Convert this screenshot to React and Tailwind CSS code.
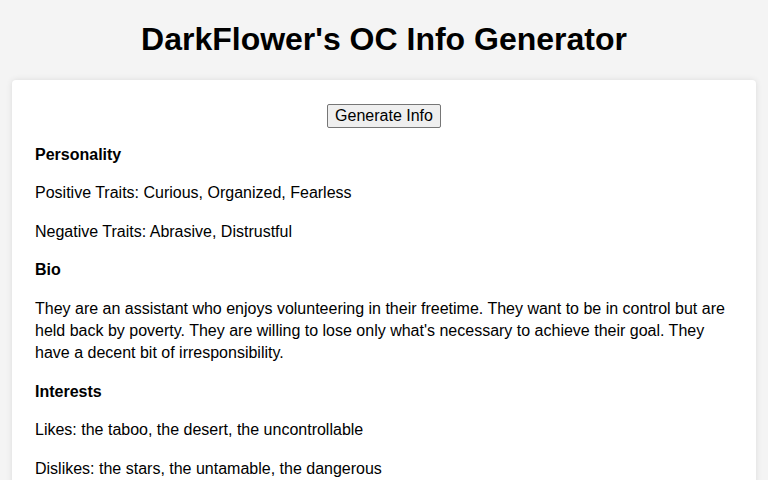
const traits = {
  positive: ["Curious", "Organized", "Fearless"],
  negative: ["Abrasive", "Distrustful"],
};

const bio =
  "They are an assistant who enjoys volunteering in their freetime. They want to be in control but are held back by poverty. They are willing to lose only what's necessary to achieve their goal. They have a decent bit of irresponsibility.";

const interests = {
  likes: ["the taboo", "the desert", "the uncontrollable"],
  dislikes: ["the stars", "the untamable", "the dangerous"],
};

function Section({ title, children }) {
  return (
    <>
      <p className="font-bold mb-4">{title}</p>
      {children}
    </>
  );
}

export default function App() {
  return (
    <div className="min-h-screen bg-[#f4f4f4] text-black font-['Liberation_Sans',Arial,sans-serif] leading-[1.4]">
      <h1 className="text-center text-[32px] font-bold leading-[37px] pt-[21px] pb-[22px]">
        DarkFlower's OC Info Generator
      </h1>
      <div className="mx-3 bg-white rounded shadow-[0_0_6px_rgba(0,0,0,0.1)] px-[23px] pt-6 pb-6">
        <div className="flex justify-center mb-4">
          <button
            type="button"
            className="bg-[#efefef] border border-[#767676] rounded-[2px] px-[7px] py-0 text-base leading-[22px] hover:bg-[#e5e5e5]"
          >
            Generate Info
          </button>
        </div>

        <Section title="Personality">
          <p className="mb-4">Positive Traits: {traits.positive.join(", ")}</p>
          <p className="mb-4">Negative Traits: {traits.negative.join(", ")}</p>
        </Section>

        <Section title="Bio">
          <p className="mb-4">{bio}</p>
        </Section>

        <Section title="Interests">
          <p className="mb-4">Likes: {interests.likes.join(", ")}</p>
          <p className="mb-4">Dislikes: {interests.dislikes.join(", ")}</p>
        </Section>
      </div>
    </div>
  );
}
